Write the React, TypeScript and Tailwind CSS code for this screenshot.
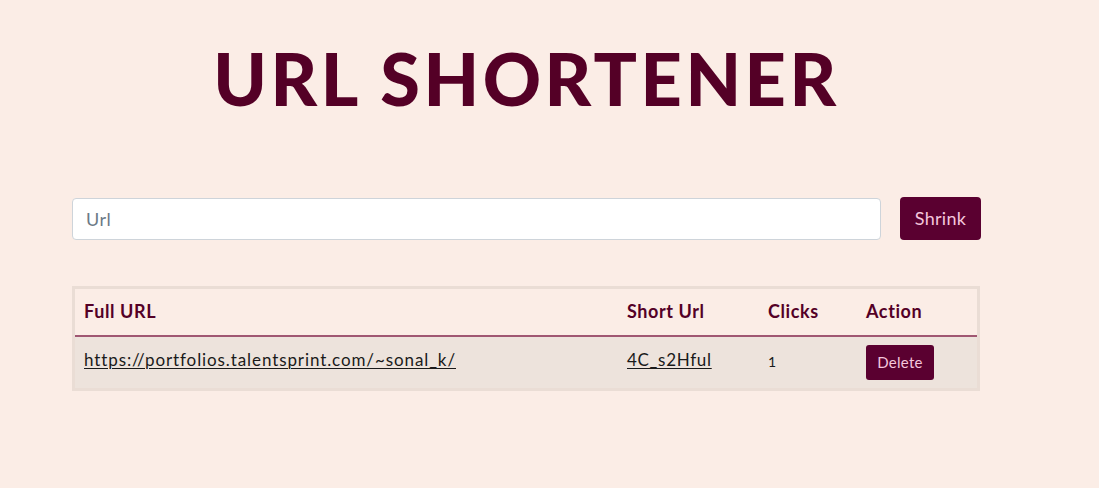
import React from "react";

export default function App() {
  const font = { fontFamily: "Lato, 'Open Sans', sans-serif" };
  return (
    <div className="min-h-[488px] w-full bg-[#fbede6]" style={font}>
      <div className="ml-[72px] w-[909px] pt-[36px]">
        <h1 className="text-center text-[72px] font-black leading-[84px] tracking-[3.5px] text-[#540026]">
          URL SHORTENER
        </h1>
        <div className="mt-[77px] flex items-center gap-[19px]">
          <input
            className="h-[42px] w-[809px] rounded-[4px] border border-[#ced4da] bg-white px-[13px] text-[18px] tracking-[0.5px] text-[#495057] placeholder:text-[#6c7a86] outline-none"
            placeholder="Url"
          />
          <button className="h-[43px] w-[81px] rounded-[4px] bg-[#5a0030] text-[18px] tracking-[0.3px] text-[#f4c6dc]">
            Shrink
          </button>
        </div>
        <div className="mt-[46px] w-[908px] border-[3px] border-[#eaddd5]">
          <table className="w-full table-fixed border-collapse">
            <colgroup>
              <col className="w-[543px]" />
              <col className="w-[141px]" />
              <col className="w-[98px]" />
              <col />
            </colgroup>
            <thead>
              <tr className="h-[47px] border-b-2 border-[#a05772] bg-[#fbede6] text-left text-[18px] font-bold tracking-[0.6px] text-[#540026]">
                <th className="pl-[9px] pb-[2px] font-bold">Full URL</th>
                <th className="pl-[9px] pb-[2px] font-bold">Short Url</th>
                <th className="pl-[9px] pb-[2px] font-bold">Clicks</th>
                <th className="pl-[9px] pb-[2px] font-bold">Action</th>
              </tr>
            </thead>
            <tbody>
              <tr className="h-[52px] bg-[#ede3dc] text-[#1a1a1a]">
                <td className="pl-[9px] pb-[6px] align-middle">
                  <a className="text-[17px] tracking-[0.9px] text-[#1a1a1a] underline decoration-1 underline-offset-2" href="#">
                    https://portfolios.talentsprint.com/~sonal_k/
                  </a>
                </td>
                <td className="pl-[9px] pb-[6px] align-middle">
                  <a className="text-[17px] tracking-[0.7px] text-[#1a1a1a] underline decoration-1 underline-offset-2" href="#">
                    4C_s2Hful
                  </a>
                </td>
                <td className="pl-[9px] pb-[3px] align-middle text-[14px]">1</td>
                <td className="pl-[9px] align-middle">
                  <button className="h-[35px] w-[68px] rounded-[3px] bg-[#5a0030] text-[15px] tracking-[0.3px] text-[#f4c6dc]">
                    Delete
                  </button>
                </td>
              </tr>
            </tbody>
          </table>
        </div>
      </div>
    </div>
  );
}
